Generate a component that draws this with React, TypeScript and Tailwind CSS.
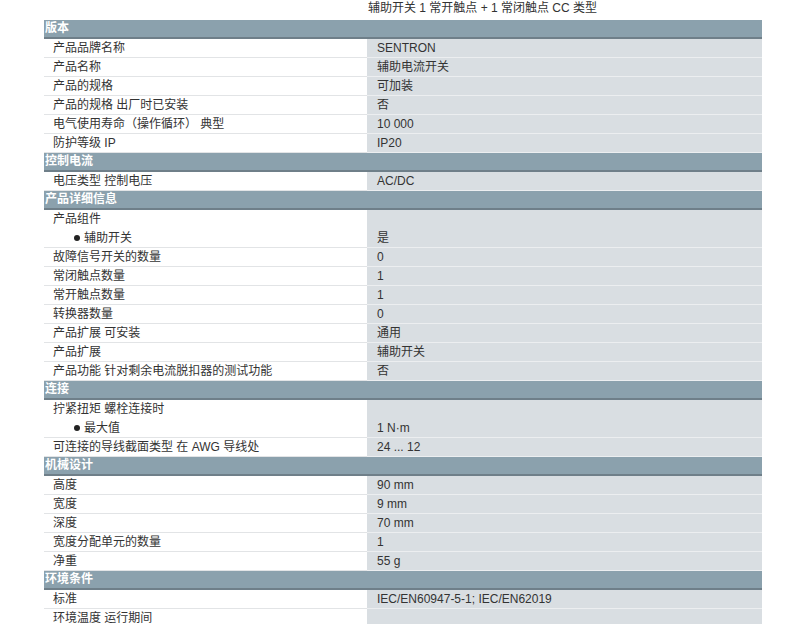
import React from "react";

type Item =
  | { kind: "h"; title: string }
  | { kind: "r"; label: string; value: string }
  | { kind: "g"; label: string; sub: string; value: string };

const data: Item[] = [
  { kind: "h", title: "版本" },
  { kind: "r", label: "产品品牌名称", value: "SENTRON" },
  { kind: "r", label: "产品名称", value: "辅助电流开关" },
  { kind: "r", label: "产品的规格", value: "可加装" },
  { kind: "r", label: "产品的规格 出厂时已安装", value: "否" },
  { kind: "r", label: "电气使用寿命（操作循环） 典型", value: "10 000" },
  { kind: "r", label: "防护等级 IP", value: "IP20" },
  { kind: "h", title: "控制电流" },
  { kind: "r", label: "电压类型 控制电压", value: "AC/DC" },
  { kind: "h", title: "产品详细信息" },
  { kind: "g", label: "产品组件", sub: "辅助开关", value: "是" },
  { kind: "r", label: "故障信号开关的数量", value: "0" },
  { kind: "r", label: "常闭触点数量", value: "1" },
  { kind: "r", label: "常开触点数量", value: "1" },
  { kind: "r", label: "转换器数量", value: "0" },
  { kind: "r", label: "产品扩展 可安装", value: "通用" },
  { kind: "r", label: "产品扩展", value: "辅助开关" },
  { kind: "r", label: "产品功能 针对剩余电流脱扣器的测试功能", value: "否" },
  { kind: "h", title: "连接" },
  { kind: "g", label: "拧紧扭矩 螺栓连接时", sub: "最大值", value: "1 N·m" },
  { kind: "r", label: "可连接的导线截面类型 在 AWG 导线处", value: "24 ... 12" },
  { kind: "h", title: "机械设计" },
  { kind: "r", label: "高度", value: "90 mm" },
  { kind: "r", label: "宽度", value: "9 mm" },
  { kind: "r", label: "深度", value: "70 mm" },
  { kind: "r", label: "宽度分配单元的数量", value: "1" },
  { kind: "r", label: "净重", value: "55 g" },
  { kind: "h", title: "环境条件" },
  { kind: "r", label: "标准", value: "IEC/EN60947-5-1; IEC/EN62019" },
  { kind: "r", label: "环境温度 运行期间", value: "" },
];

export default function App() {
  return (
    <div
      className="w-[800px] h-[624px] overflow-hidden bg-white text-[12px] text-[#333333] leading-[19px]"
      style={{ fontFamily: '"Liberation Sans", "Noto Sans CJK SC", sans-serif' }}
    >
      <div className="ml-[44px] w-[718px]">
        <div className="flex h-[20px] items-start">
          <div className="w-[323px]" />
          <div className="pl-[1px] leading-[17px]">辅助开关 1 常开触点 + 1 常闭触点 CC 类型</div>
        </div>
        {data.map((it, i) => {
          if (it.kind === "h") {
            return (
              <div
                key={i}
                className="h-[19px] bg-[#8ba1ad] border-b-2 border-[#6f7f89] pl-[1px] text-white font-bold leading-[16px]"
              >
                {it.title}
              </div>
            );
          }
          if (it.kind === "g") {
            return (
              <div key={i} className="flex h-[38px]">
                <div className="w-[323px] border-b border-[#e2e4e6] pl-[9px]">
                  <div className="h-[19px] leading-[18px]">{it.label}</div>
                  <div className="h-[18px] pl-[21px] flex items-center">
                    <span className="inline-block w-[6px] h-[6px] rounded-full bg-[#222222] mr-[4px]" />
                    {it.sub}
                  </div>
                </div>
                <div className="flex-1 bg-[#d9dee2] border-b border-[#eceef0] pl-[10px] flex items-end">
                  <div className="h-[18px] leading-[18px]">{it.value}</div>
                </div>
              </div>
            );
          }
          return (
            <div key={i} className="flex h-[19px]">
              <div className="w-[323px] border-b border-[#e2e4e6] pl-[9px] leading-[18px]">{it.label}</div>
              <div className="flex-1 bg-[#d9dee2] border-b border-[#eceef0] pl-[10px] leading-[18px]">
                {it.value}
              </div>
            </div>
          );
        })}
      </div>
    </div>
  );
}
